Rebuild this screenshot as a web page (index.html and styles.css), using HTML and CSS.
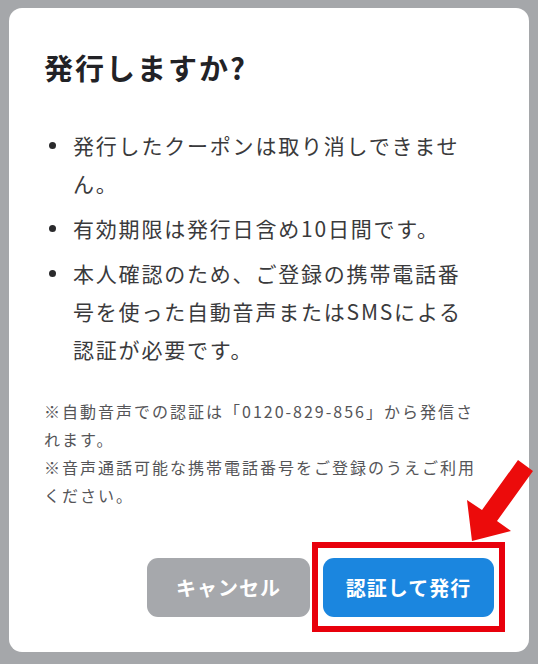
FILE: index.html
```html
<!DOCTYPE html>
<html lang="ja">
<head>
<meta charset="utf-8">
<title>発行しますか?</title>
<link rel="stylesheet" href="styles.css">
</head>
<body>
<div class="dialog">
  <h1 class="title">発行しますか?</h1>
  <ul class="points">
    <li>発行したクーポンは取り消しできません。</li>
    <li>有効期限は発行日含め10日間です。</li>
    <li>本人確認のため、ご登録の携帯電話番号を使った自動音声またはSMSによる認証が必要です。</li>
  </ul>
  <div class="notes">
    <p>※自動音声での認証は「0120-829-856」から発信されます。</p>
    <p>※音声通話可能な携帯電話番号をご登録のうえご利用ください。</p>
  </div>
  <div class="actions">
    <button class="btn btn-cancel">キャンセル</button>
    <div class="highlight">
      <button class="btn btn-primary">認証して発行</button>
    </div>
  </div>
</div>
<svg class="arrow" width="538" height="664" viewBox="0 0 538 664" aria-hidden="true">
  <polygon points="518,460 533,471 497,521 511,531 472,541 467,500 482,510" fill="#ec0b0b"/>
</svg>
</body>
</html>
```
FILE: styles.css
```css
html, body {
  margin: 0;
  padding: 0;
}
body {
  background: #a5a7aa;
  width: 538px;
  height: 664px;
  overflow: hidden;
  font-family: "Noto Sans CJK JP", "Noto Sans", sans-serif;
  position: relative;
}
.dialog {
  box-sizing: border-box;
  margin: 8px 9px 0 9px;
  width: 520px;
  height: 644px;
  background: #ffffff;
  border-radius: 13px;
  padding: 41px 35px 35px 35px;
  display: flex;
  flex-direction: column;
}
.title {
  margin: 0;
  font-size: 29px;
  line-height: 36px;
  font-weight: 700;
  letter-spacing: 2px;
  color: #222226;
}
.points {
  margin: 41px 0 0 0;
  padding: 0;
  list-style: none;
  display: flex;
  flex-direction: column;
  gap: 7px;
}
.points li {
  position: relative;
  padding-left: 29px;
  width: 398px;
  font-size: 21px;
  line-height: 38px;
  letter-spacing: 1.8px;
  color: #3a3a3c;
}
.points li::before {
  content: "";
  position: absolute;
  left: 5px;
  top: 16px;
  width: 7px;
  height: 7px;
  border-radius: 50%;
  background: #2a2a2c;
}
.notes {
  margin-top: 29px;
  width: 440px;
  font-size: 16px;
  line-height: 28px;
  letter-spacing: 2px;
  color: #555558;
}
.notes p {
  margin: 0;
}
.actions {
  margin-top: auto;
  display: flex;
  justify-content: flex-end;
  gap: 13px;
}
.btn {
  border: none;
  height: 59px;
  border-radius: 11px;
  font-family: "Noto Sans CJK JP", "Noto Sans", sans-serif;
  font-size: 20px;
  font-weight: 700;
  color: #ffffff;
  letter-spacing: 1px;
  padding: 0;
}
.btn-cancel {
  width: 163px;
  background: #a6a8ac;
}
.btn-primary {
  width: 171px;
  background: #1b86df;
  display: block;
}
.highlight {
  position: relative;
}
.highlight::after {
  content: "";
  position: absolute;
  top: -16px;
  bottom: -15px;
  left: -11px;
  right: -11px;
  border: 6px solid #e8000c;
}
.arrow {
  position: absolute;
  top: 0;
  left: 0;
  pointer-events: none;
}
```
